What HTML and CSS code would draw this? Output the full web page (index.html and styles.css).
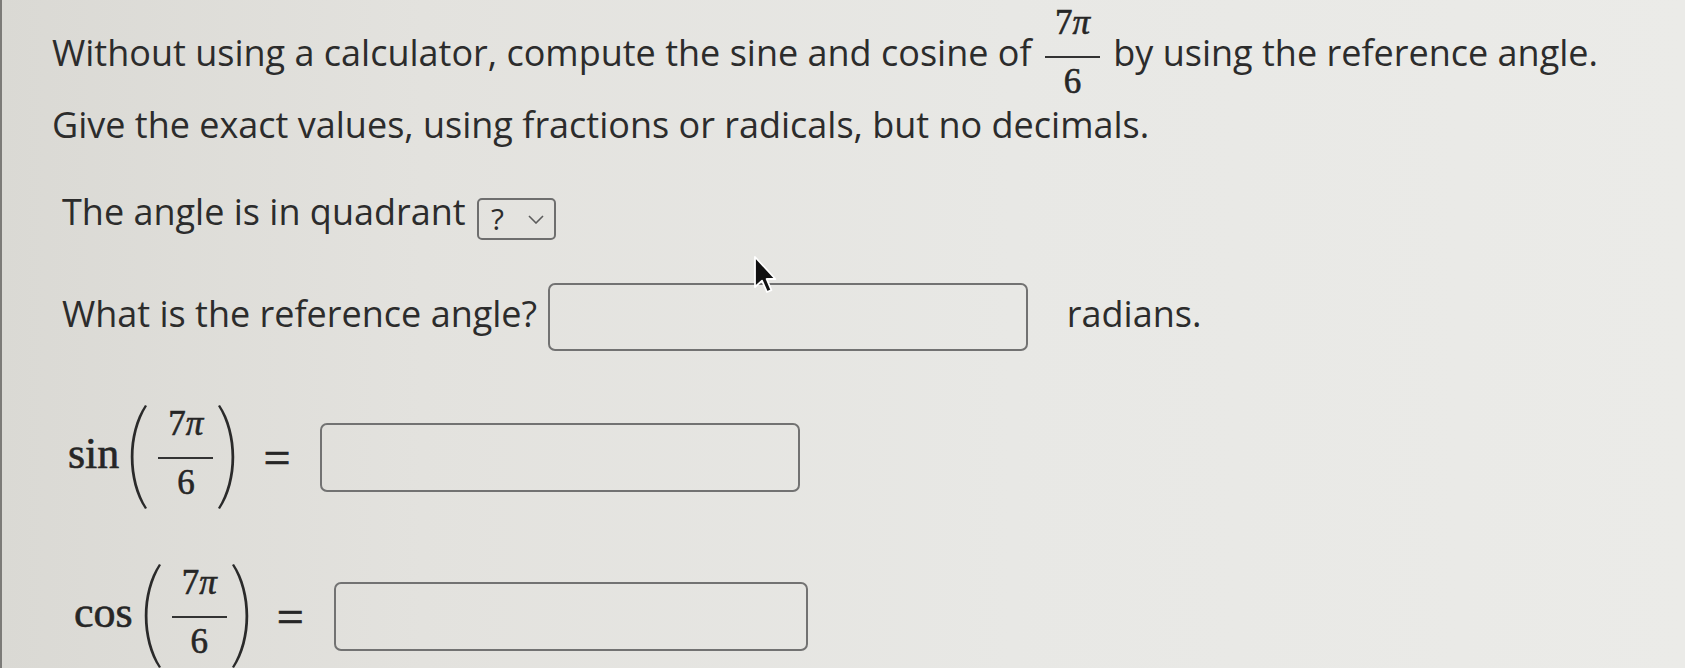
FILE: index.html
```html
<!DOCTYPE html>
<html lang="en">
<head>
    <meta charset="UTF-8">
    <meta name="viewport" content="width=device-width, initial-scale=1.0">
    <title>Reference Angle Question</title>
    <link rel="stylesheet" href="styles.css">
</head>
<body>
    <div class="question">
        <!-- Prompt text -->
        <p class="line line-first">Without using a calculator, compute the sine and cosine of <span class="frac"><span class="num">7<i>π</i></span><span class="den">6</span></span> by using the reference angle.</p>
        <p class="line line-second">Give the exact values, using fractions or radicals, but no decimals.</p>

        <!-- Quadrant dropdown -->
        <div class="line row-quadrant">The angle is in quadrant <span class="select"><span>?</span><svg class="chevron" width="16" height="9" viewBox="0 0 16 9"><polyline points="1,1 8,8 15,1" fill="none" stroke="#5c5c5c" stroke-width="1.6"/></svg></span></div>

        <!-- Reference angle answer -->
        <div class="line row-ref">What is the reference angle? <span class="answer answer-ref"></span> radians.</div>

        <!-- sin(7pi/6) -->
        <div class="math-row math-sin">
            <span class="fn">sin</span>
            <svg class="paren" width="20" height="104" viewBox="0 0 20 104"><path d="M17 0 C-2 28 -2 76 17 104 L19 103 C1 74 1 30 19 1 Z"/></svg>
            <span class="frac"><span class="num">7<i>π</i></span><span class="den">6</span></span>
            <svg class="paren paren-right" width="20" height="104" viewBox="0 0 20 104"><path d="M17 0 C-2 28 -2 76 17 104 L19 103 C1 74 1 30 19 1 Z"/></svg>
            <span class="eq">=</span>
            <span class="answer answer-math"></span>
        </div>

        <!-- cos(7pi/6) -->
        <div class="math-row math-cos">
            <span class="fn">cos</span>
            <svg class="paren" width="20" height="104" viewBox="0 0 20 104"><path d="M17 0 C-2 28 -2 76 17 104 L19 103 C1 74 1 30 19 1 Z"/></svg>
            <span class="frac"><span class="num">7<i>π</i></span><span class="den">6</span></span>
            <svg class="paren paren-right" width="20" height="104" viewBox="0 0 20 104"><path d="M17 0 C-2 28 -2 76 17 104 L19 103 C1 74 1 30 19 1 Z"/></svg>
            <span class="eq">=</span>
            <span class="answer answer-math"></span>
        </div>
    </div>

    <!-- mouse pointer over the first answer box -->
    <svg class="cursor" width="24" height="40" viewBox="0 0 12 20"><path d="M1 1 L1 16 L4.5 12.8 L7 18.5 L9.2 17.6 L6.8 12 L11.2 12 Z" fill="#111" stroke="#fff" stroke-width="0.9" stroke-linejoin="round"/></svg>
</body>
</html>
```

FILE: styles.css
```css
/* Photo of a worksheet page, light grey paper look */
body {
    margin: 0;
    padding: 5px 0 0 52px;
    height: 668px;
    box-sizing: border-box;
    overflow: hidden;
    font-family: "Open Sans", "Liberation Sans", sans-serif;
    font-size: 36px;
    font-weight: 500;
    line-height: 49px;
    color: #2c2c2c;
    background: linear-gradient(90deg, #dad9d4 0%, #e3e2de 25%, #e8e8e5 60%, #ebebe8 100%);
    box-shadow: inset 2px 0 0 #7c7b78;
    position: relative;
}
.line {
    margin: 0;
    white-space: nowrap;
}
.line-second {
    margin-top: -7px;
}
.row-quadrant {
    margin-top: 38px;
    margin-left: 10px;
}
.row-ref {
    margin-top: 43px;
    margin-left: 10px;
}

/* stacked fraction */
.frac {
    display: inline-flex;
    flex-direction: column;
    align-items: center;
    vertical-align: middle;
    margin: 0 4px 7px;
    font-family: "Liberation Serif", serif;
    font-size: 35px;
    font-weight: 400;
    line-height: 36px;
    color: #262626;
    -webkit-text-stroke: 0.6px #262626;
}
.frac .num {
    padding: 0 10px 15px;
}
.frac .den {
    align-self: stretch;
    text-align: center;
    border-top: 2px solid #333;
    padding-top: 6px;
}

/* dropdown */
.select {
    display: inline-flex;
    align-items: center;
    gap: 24px;
    height: 42px;
    box-sizing: border-box;
    margin-left: 2px;
    padding: 0 10px 0 12px;
    border: 2px solid #6e6e6e;
    border-radius: 5px;
    font-size: 30px;
    line-height: 38px;
    vertical-align: -5px;
}

/* answer boxes */
.answer {
    display: inline-block;
    box-sizing: border-box;
    border: 2px solid #727272;
    border-radius: 7px;
}
.answer-ref {
    width: 480px;
    height: 68px;
    vertical-align: middle;
    margin: 0 29px 0 2px;
}
.answer-math {
    width: 480px;
    height: 69px;
    margin-left: 30px;
}

/* sin / cos rows */
.math-row {
    display: flex;
    align-items: center;
    height: 104px;
    font-family: "Liberation Serif", serif;
    font-size: 44px;
    font-weight: 400;
    color: #262626;
    -webkit-text-stroke: 0.6px #262626;
}
.math-sin {
    margin-top: 54px;
    margin-left: 16px;
}
.math-cos {
    margin-top: 55px;
    margin-left: 22px;
}
.math-cos .answer-math {
    width: 474px;
}
.fn {
    padding-bottom: 8px;
}
.paren {
    fill: #2a2a2a;
    margin-left: 9px;
}
.paren-right {
    transform: scaleX(-1);
    margin-left: 0;
}
.math-row .frac {
    margin: 0 4px 7px 10px;
}
.eq {
    font-size: 48px;
    margin-left: 26px;
}

.cursor {
    position: absolute;
    left: 753px;
    top: 255px;
}
```
